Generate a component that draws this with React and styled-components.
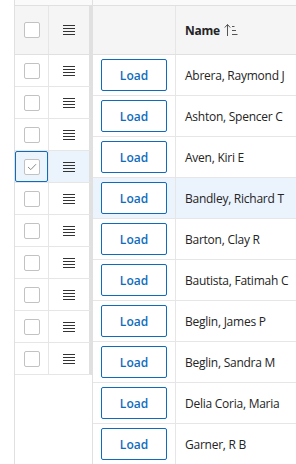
import React from 'react';
import styled, { createGlobalStyle } from 'styled-components';

const names = [
  'Abrera, Raymond J',
  'Ashton, Spencer C',
  'Aven, Kiri E',
  'Bandley, Richard T',
  'Barton, Clay R',
  'Bautista, Fatimah C',
  'Beglin, James P',
  'Beglin, Sandra M',
  'Delia Coria, Maria',
  'Garner, R B',
];

const SELECTED = 3;
const PINNED_ROWS = 10;

const GlobalStyle = createGlobalStyle`
  html, body {
    margin: 0;
    padding: 0;
    background: #ffffff;
    font-family: "Open Sans", "Noto Sans", "Liberation Sans", sans-serif;
    color: #242424;
  }
`;

const MenuIcon = () => (
  <svg width="12" height="10" viewBox="0 0 12 10">
    <g stroke="#333" strokeWidth="1">
      <line x1="0" y1="0.5" x2="12" y2="0.5" />
      <line x1="0" y1="3.5" x2="12" y2="3.5" />
      <line x1="0" y1="6.5" x2="12" y2="6.5" />
      <line x1="0" y1="9.5" x2="12" y2="9.5" />
    </g>
  </svg>
);

const SortIcon = () => (
  <svg width="14" height="14" viewBox="0 0 14 14">
    <g stroke="#555" strokeWidth="1" fill="none">
      <line x1="3.5" y1="1.5" x2="3.5" y2="13" />
      <polyline points="0.8,4.5 3.5,1.5 6.2,4.5" />
      <line x1="8" y1="3.5" x2="10.5" y2="3.5" />
      <line x1="8" y1="7.5" x2="12" y2="7.5" />
      <line x1="8" y1="11.5" x2="13.5" y2="11.5" />
    </g>
  </svg>
);

const Check = () => (
  <svg width="10" height="8" viewBox="0 0 10 8">
    <polyline points="1,4 3.8,6.6 9,1.2" stroke="#888" strokeWidth="1" fill="none" />
  </svg>
);

const Page = styled.div`
  display: flex;
  height: 464px;
  padding-left: 14px;
  overflow: hidden;
`;

const PinnedPane = styled.div`
  width: 77px;
  flex: none;
  border-left: 1px solid #e0e0e0;
  border-right: 1px solid #e0e0e0;
`;

const MainPane = styled.div`
  flex: 1;
  min-width: 0;
`;

const Band = styled.div`
  height: 5px;
  background: #fafafa;
  border-bottom: 1px solid #e0e0e0;
`;

const HeaderRow = styled.div`
  display: flex;
  height: 48px;
  background: #f5f5f5;
  border-bottom: 1px solid #e0e0e0;
  border-right: ${(p) => (p.$pinned ? '3px solid #e0e0e0' : 'none')};
`;

const Row = styled.div`
  display: flex;
  height: ${(p) => (p.$pinned ? 31 : 40)}px;
  background: ${(p) => (p.$selected ? '#ebf3fc' : '#ffffff')};
  border-bottom: 1px solid #e6e6e6;
  border-right: ${(p) => (p.$pinned ? '3px solid #e0e0e0' : 'none')};
`;

const Cell = styled.div`
  position: relative;
  display: flex;
  align-items: center;
  justify-content: ${(p) => (p.$center ? 'center' : 'flex-start')};
  box-sizing: border-box;
  width: ${(p) => (p.$width ? `${p.$width}px` : 'auto')};
  flex: ${(p) => (p.$width ? 'none' : '1')};
  padding: ${(p) => (p.$pad ? `0 ${p.$pad}px` : '0')};
  border-right: ${(p) => (p.$divider ? '1px solid #e6e6e6' : 'none')};
  font-size: 12px;
  letter-spacing: -0.25px;
  white-space: nowrap;
`;

const Focus = styled.div`
  position: absolute;
  inset: 0;
  border: 1px solid #0f6cbd;
  border-radius: 2px;
`;

const Box = styled.span`
  position: relative;
  display: flex;
  align-items: center;
  justify-content: center;
  width: 16px;
  height: 16px;
  box-sizing: border-box;
  border: 1px solid #c2c2c2;
  border-radius: 2px;
  background: #ffffff;
`;

const HeaderLabel = styled.span`
  display: flex;
  align-items: center;
  gap: 4px;
  font-weight: 700;
  font-size: 12px;
  color: #242424;
`;

const LoadButton = styled.button`
  width: 67px;
  height: 32px;
  box-sizing: border-box;
  border: 1px solid #0f6cbd;
  border-radius: 2px;
  background: #ffffff;
  color: #0f6cbd;
  font-family: inherit;
  font-size: 12px;
  font-weight: 600;
  cursor: pointer;
  padding: 0;
`;

export default function App() {
  return (
    <>
      <GlobalStyle />
      <Page>
        <PinnedPane>
          <Band />
          <HeaderRow $pinned>
            <Cell $width={34} $center $divider>
              <Box />
            </Cell>
            <Cell $width={40} $center>
              <MenuIcon />
            </Cell>
          </HeaderRow>
          {Array.from({ length: PINNED_ROWS }).map((_, i) => (
            <Row key={i} $pinned $selected={i === SELECTED}>
              <Cell $width={34} $center $divider>
                {i === SELECTED && <Focus />}
                <Box>{i === SELECTED && <Check />}</Box>
              </Cell>
              <Cell $width={40} $center>
                <MenuIcon />
              </Cell>
            </Row>
          ))}
        </PinnedPane>
        <MainPane>
          <Band />
          <HeaderRow>
            <Cell $width={83} $divider />
            <Cell $pad={9}>
              <HeaderLabel>
                Name <SortIcon />
              </HeaderLabel>
            </Cell>
          </HeaderRow>
          {names.map((name, i) => (
            <Row key={name} $selected={i === SELECTED}>
              <Cell $width={83} $pad={8} $divider>
                <LoadButton>Load</LoadButton>
              </Cell>
              <Cell $pad={9}>{name}</Cell>
            </Row>
          ))}
        </MainPane>
      </Page>
    </>
  );
}
